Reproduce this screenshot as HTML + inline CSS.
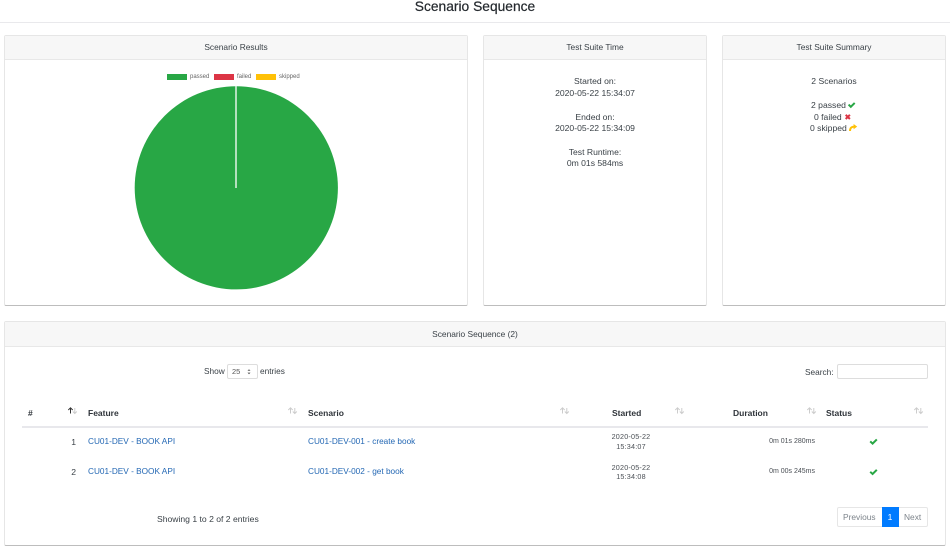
<!DOCTYPE html>
<html>
<head>
<meta charset="utf-8">
<title>Scenario Sequence</title>
<style>
html,body{margin:0;padding:0;background:#fff;}
body{width:950px;height:550px;position:relative;overflow:hidden;font-family:"Liberation Sans",sans-serif;color:#3a4147;font-size:8.6px;}
#w{position:absolute;left:0;top:0;width:950px;height:550px;filter:blur(.3px);}
.a{position:absolute;white-space:nowrap;line-height:12px;}
.c{transform:translateX(-50%);}
.r{transform:translateX(-100%);}
.card{position:absolute;background:#fff;border:1px solid #e6e6e6;border-bottom:1px solid #bdbdbd;border-radius:2px;box-sizing:border-box;}
.hd{position:absolute;left:0;right:0;top:0;background:#f7f7f7;border-bottom:1px solid #e8e8e8;text-align:center;line-height:23px;height:23px;font-size:8.4px;}
.th{font-weight:bold;color:#2f343a;font-size:8.5px;}
.lnk{color:#2468b4;font-size:8.25px;}
.sm{font-size:7.2px;letter-spacing:.2px;line-height:9.5px;text-align:center;color:#4a4f55;}
.du{font-size:7px;color:#4a4f55;line-height:9.5px;}
svg{position:absolute;overflow:visible;}
</style>
</head>
<body>
<div id="w">
<div class="a c" style="left:475px;top:-2px;font-size:13.8px;line-height:17px;color:#24292e;-webkit-text-stroke:.2px #24292e;">Scenario Sequence</div>
<div style="position:absolute;left:0;top:22px;width:950px;height:1px;background:#e9e9ec;"></div>

<div class="card" style="left:4px;top:35px;width:464px;height:271px;"><div class="hd">Scenario Results</div></div>
<div class="card" style="left:483px;top:35px;width:224px;height:271px;"><div class="hd">Test Suite Time</div></div>
<div class="card" style="left:722px;top:35px;width:224px;height:271px;"><div class="hd">Test Suite Summary</div></div>
<div class="card" style="left:4px;top:321px;width:942px;height:225px;"><div class="hd" style="height:24px;line-height:24px;">Scenario Sequence (2)</div></div>

<!-- legend -->
<div style="position:absolute;left:167px;top:74px;width:20px;height:6px;background:#28a745;"></div>
<div class="a" style="left:190px;top:71px;font-size:6px;color:#666;">passed</div>
<div style="position:absolute;left:214px;top:74px;width:20px;height:6px;background:#dc3545;"></div>
<div class="a" style="left:237px;top:71px;font-size:6px;color:#666;">failed</div>
<div style="position:absolute;left:256px;top:74px;width:20px;height:6px;background:#ffc107;"></div>
<div class="a" style="left:279px;top:71px;font-size:6px;color:#666;">skipped</div>

<!-- pie -->
<svg style="left:0;top:0;" width="950" height="550">
<circle cx="236.3" cy="187.8" r="101.6" fill="#28a745"/>
<line x1="236" y1="86" x2="236" y2="188" stroke="#f0f9f2" stroke-width="1.4"/>
</svg>

<!-- time -->
<div class="a c" style="left:595px;top:75px;">Started on:</div>
<div class="a c" style="left:595px;top:87px;">2020-05-22 15:34:07</div>
<div class="a c" style="left:595px;top:111px;">Ended on:</div>
<div class="a c" style="left:595px;top:122px;">2020-05-22 15:34:09</div>
<div class="a c" style="left:595px;top:146px;">Test Runtime:</div>
<div class="a c" style="left:595px;top:157px;">0m 01s 584ms</div>

<!-- summary -->
<div class="a c" style="left:834px;top:75px;">2 Scenarios</div>
<div class="a" style="left:811px;top:99px;">2 passed</div>
<div class="a" style="left:814px;top:111px;">0 failed</div>
<div class="a" style="left:810px;top:122px;">0 skipped</div>
<svg style="left:0;top:0;" width="950" height="550">
<path d="M848.6 104.6l2.2 2.2 3.9-3.9" fill="none" stroke="#28a745" stroke-width="2"/>
<path d="M845.7 114.8l4.2 4.2M849.9 114.8l-4.2 4.2" fill="none" stroke="#dc3545" stroke-width="2"/>
<path d="M850 131c0-3 1.6-4.4 4-4.4" fill="none" stroke="#ffc107" stroke-width="2"/>
<path d="M853.6 124l3.6 2.6-3.6 2.6z" fill="#ffc107"/>
</svg>

<!-- table controls -->
<div class="a" style="left:204px;top:365px;font-size:8.3px;">Show</div>
<div style="position:absolute;left:227px;top:364px;width:31px;height:15px;border:1px solid #ddd;border-radius:2px;box-sizing:border-box;background:#fff;"></div>
<div class="a" style="left:232px;top:366px;font-size:7.4px;color:#555;">25</div>
<svg style="left:0;top:0;" width="950" height="550">
<path d="M247.5 370.8l1.5-1.6 1.5 1.6zM247.5 372.6l1.5 1.6 1.5-1.6z" fill="#555"/>
</svg>
<div class="a" style="left:260px;top:365px;font-size:8.3px;">entries</div>
<div class="a" style="left:805px;top:366px;font-size:8.3px;">Search:</div>
<div style="position:absolute;left:837px;top:364px;width:91px;height:15px;border:1px solid #ddd;border-radius:2px;box-sizing:border-box;background:#fff;"></div>

<!-- table head -->
<div class="a th" style="left:28px;top:407px;">#</div>
<div class="a th" style="left:88px;top:407px;">Feature</div>
<div class="a th" style="left:308px;top:407px;">Scenario</div>
<div class="a th" style="left:612px;top:407px;">Started</div>
<div class="a th" style="left:733px;top:407px;">Duration</div>
<div class="a th" style="left:826px;top:407px;">Status</div>
<svg style="left:0;top:0;" width="950" height="550">
<defs></defs>
<g fill="none" stroke-width="1">
<path d="M70.5 413.5v-5.5M68.3 410l2.2-2.2 2.2 2.2" stroke="#333"/>
<path d="M74.8 408v5.5M72.8 411.5l2 2 2-2" stroke="#ccc"/>
<path d="M290.5 413.5v-5.5M288.3 410l2.2-2.2 2.2 2.2M294.8 408v5.5M292.8 411.5l2 2 2-2" stroke="#ccc"/>
<path d="M562.5 413.5v-5.5M560.3 410l2.2-2.2 2.2 2.2M566.8 408v5.5M564.8 411.5l2 2 2-2" stroke="#ccc"/>
<path d="M677.5 413.5v-5.5M675.3 410l2.2-2.2 2.2 2.2M681.8 408v5.5M679.8 411.5l2 2 2-2" stroke="#ccc"/>
<path d="M809.5 413.5v-5.5M807.3 410l2.2-2.2 2.2 2.2M813.8 408v5.5M811.8 411.5l2 2 2-2" stroke="#ccc"/>
<path d="M916.5 413.5v-5.5M914.3 410l2.2-2.2 2.2 2.2M920.8 408v5.5M918.8 411.5l2 2 2-2" stroke="#ccc"/>
</g>
</svg>
<div style="position:absolute;left:22px;top:425.5px;width:906px;height:2px;background:#e8e8ec;"></div>

<!-- rows -->
<div class="a r" style="left:76px;top:436px;">1</div>
<div class="a lnk" style="left:88px;top:436px;">CU01-DEV - BOOK API</div>
<div class="a lnk" style="left:308px;top:436px;">CU01-DEV-001 - create book</div>
<div class="a sm c" style="left:631px;top:432px;">2020-05-22<br>15:34:07</div>
<div class="a du r" style="left:815px;top:436px;line-height:12px;">0m 01s 280ms</div>

<div class="a r" style="left:76px;top:466px;">2</div>
<div class="a lnk" style="left:88px;top:466px;">CU01-DEV - BOOK API</div>
<div class="a lnk" style="left:308px;top:466px;">CU01-DEV-002 - get book</div>
<div class="a sm c" style="left:631px;top:462.5px;">2020-05-22<br>15:34:08</div>
<div class="a du r" style="left:815px;top:466px;line-height:12px;">0m 00s 245ms</div>

<svg style="left:0;top:0;" width="950" height="550">
<path d="M870.2 441.4l2.4 2.2 4.2-4.2M870.2 471.8l2.4 2.2 4.2-4.2" fill="none" stroke="#28a745" stroke-width="2"/>
</svg>

<!-- footer -->
<div class="a" style="left:157px;top:513px;">Showing 1 to 2 of 2 entries</div>
<div style="position:absolute;left:837px;top:507px;width:91px;height:20px;border:1px solid #e6e6e6;border-radius:2px;box-sizing:border-box;"></div>
<div class="a" style="left:843px;top:511px;color:#7d848b;font-size:8.4px;">Previous</div>
<div style="position:absolute;left:882px;top:507px;width:17px;height:20px;background:#007bff;"></div>
<div class="a c" style="left:890px;top:511px;color:#fff;">1</div>
<div class="a" style="left:904px;top:511px;color:#7d848b;font-size:8.4px;">Next</div>
</div>
</body>
</html>
